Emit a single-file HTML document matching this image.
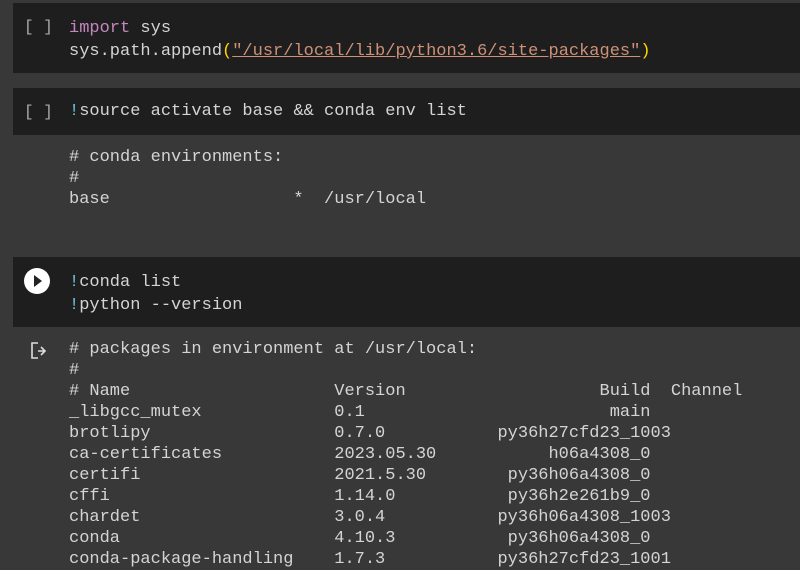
<!DOCTYPE html>
<html><head><style>
body{margin:0;width:800px;height:554px;background:#383838;overflow:hidden;font-family:"Liberation Mono",monospace;font-size:17px;color:#d4d4d4;position:relative}
.cell{position:absolute;left:13px;right:0;background:#1e1e1e}
pre{margin:0;font:inherit;position:absolute;white-space:pre}
.k{color:#c586c0}.s{color:#ce9178;text-decoration:underline}.p{color:#ffd700}.b{color:#6fc3df}
.br{position:absolute;left:24px;color:#aaa;font-size:16px}
</style></head><body>
<div class="cell" style="top:3px;height:70px"></div>
<div class="br" style="top:18px">[ ]</div>
<pre style="left:69px;top:17px;line-height:23px"><span class="k">import</span> sys
sys.path.append<span class="p">(</span><span class="s">"/usr/local/lib/python3.6/site-packages"</span><span class="p">)</span></pre>
<div class="cell" style="top:88px;height:47px"></div>
<div class="br" style="top:103px">[ ]</div>
<pre style="left:69px;top:102px"><span class="b">!</span>source activate base &amp;&amp; conda env list</pre>
<pre style="left:69px;top:147px;line-height:21px"># conda environments:
#
base                  *  /usr/local</pre>
<div class="cell" style="top:257px;height:70px"></div>
<div style="position:absolute;left:24px;top:268px;width:26px;height:26px;border-radius:50%;background:#fff"></div>
<div style="position:absolute;left:34px;top:275px;width:0;height:0;border-left:8px solid #222;border-top:6px solid transparent;border-bottom:6px solid transparent"></div>
<pre style="left:69px;top:271px;line-height:23px"><span class="b">!</span>conda list
<span class="b">!</span>python --version</pre>
<svg style="position:absolute;left:30px;top:341px" width="20" height="20" viewBox="0 0 20 20" fill="none" stroke="#ddd" stroke-width="1.6"><path d="M8 2H2v15h6M11 6l4 4-4 4M8 10h7"/></svg>
<pre style="left:69px;top:339px;line-height:21px"># packages in environment at /usr/local:
#
# Name                    Version                   Build  Channel
_libgcc_mutex             0.1                        main
brotlipy                  0.7.0           py36h27cfd23_1003
ca-certificates           2023.05.30           h06a4308_0
certifi                   2021.5.30        py36h06a4308_0
cffi                      1.14.0           py36h2e261b9_0
chardet                   3.0.4           py36h06a4308_1003
conda                     4.10.3           py36h06a4308_0
conda-package-handling    1.7.3           py36h27cfd23_1001</pre>
</body></html>
